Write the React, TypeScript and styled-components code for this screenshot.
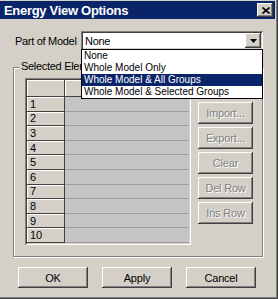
import React from "react";
import styled, { createGlobalStyle } from "styled-components";

const face = "#d4d0c8";
const navy = "#0a246a";

const GlobalStyle = createGlobalStyle`
  html, body {
    margin: 0;
    padding: 0;
    background: ${face};
  }
  body {
    font-family: "Liberation Sans", Arial, sans-serif;
    font-size: 11px;
    color: #000;
  }
  * {
    box-sizing: border-box;
  }
`;

const raised = `
  background: ${face};
  box-shadow: inset -1px -1px #404040, inset 1px 1px #ffffff,
    inset -2px -2px #808080, inset 2px 2px ${face};
`;

const sunken = `
  box-shadow: inset 1px 1px #808080, inset -1px -1px #ffffff,
    inset 2px 2px #404040, inset -2px -2px ${face};
`;

const partOptions = [
  "None",
  "Whole Model Only",
  "Whole Model & All Groups",
  "Whole Model & Selected Groups",
];

const rows = [1, 2, 3, 4, 5, 6, 7, 8, 9, 10];

const App = () => {
  return (
    <>
      <GlobalStyle />
      <Window>
        <TitleBar>
          <Title>Energy View Options</Title>
          <CloseButton>
            <svg width="8" height="7" viewBox="0 0 8 7">
              <path d="M0.5 0.5 L7.5 6.5 M7.5 0.5 L0.5 6.5" stroke="#000" strokeWidth="1.6" />
            </svg>
          </CloseButton>
        </TitleBar>

        <Body>
          <FieldRow>
            <FieldLabel>Part of Model</FieldLabel>
            <Combo>
              <ComboText>None</ComboText>
              <ArrowButton>
                <svg width="7" height="4" viewBox="0 0 7 4">
                  <path d="M0 0 H7 L3.5 4 Z" fill="#000" />
                </svg>
              </ArrowButton>
              {/* open list, drawn over the group box below */}
              <DropList>
                {partOptions.map((o, i) => (
                  <DropItem key={o} $active={i === 2}>{o}</DropItem>
                ))}
              </DropList>
            </Combo>
          </FieldRow>

          <GroupBox>
            <GroupCaption>Selected Elements</GroupCaption>
            <Grid>
              <GridInner>
                <HeadCell />
                <HeadCell />
                {rows.map((r) => (
                  <React.Fragment key={r}>
                    <RowHead>{r}</RowHead>
                    <DataCell />
                  </React.Fragment>
                ))}
              </GridInner>
            </Grid>
            <SideButtons>
              <SideButton disabled>Import...</SideButton>
              <SideButton disabled>Export...</SideButton>
              <SideButton disabled>Clear</SideButton>
              <SideButton disabled>Del Row</SideButton>
              <SideButton disabled>Ins Row</SideButton>
            </SideButtons>
          </GroupBox>

          <Footer>
            <DialogButton>OK</DialogButton>
            <DialogButton>Apply</DialogButton>
            <DialogButton>Cancel</DialogButton>
          </Footer>
        </Body>
      </Window>
    </>
  );
};

const Window = styled.div`
  width: 278px;
  height: 299px;
  padding: 1px 3px 3px 0;
  background: ${face};
  display: flex;
  flex-direction: column;
  box-shadow: inset -1px -1px #404040, inset -2px -2px #808080;
`;

const TitleBar = styled.div`
  height: 18px;
  background: ${navy};
  display: flex;
  align-items: center;
  justify-content: space-between;
  padding: 0 2px 0 4px;
`;

const Title = styled.div`
  color: #fff;
  font-weight: bold;
  font-size: 13px;
  letter-spacing: -0.3px;
`;

const CloseButton = styled.div`
  width: 16px;
  height: 14px;
  ${raised};
  display: flex;
  align-items: center;
  justify-content: center;
  padding-left: 1px;
`;

const Body = styled.div`
  display: flex;
  flex-direction: column;
  padding-left: 13px;
`;

const FieldRow = styled.div`
  margin-top: 12px;
  height: 19px;
  display: flex;
  align-items: center;
  position: relative;
  z-index: 2;
`;

const FieldLabel = styled.div`
  width: 68px;
  padding-left: 2px;
  letter-spacing: -0.3px;
`;

const Combo = styled.div`
  position: relative;
  width: 182px;
  height: 19px;
  background: #fff;
  ${sunken};
  display: flex;
  align-items: center;
  justify-content: space-between;
  padding: 2px;
`;

const ComboText = styled.div`
  padding-left: 2px;
  letter-spacing: -0.3px;
`;

const ArrowButton = styled.div`
  width: 16px;
  height: 15px;
  ${raised};
  display: flex;
  align-items: center;
  justify-content: center;
`;

const DropList = styled.div`
  position: absolute;
  left: 0;
  top: 18px;
  width: 182px;
  background: #fff;
  border: 1px solid #000;
  display: flex;
  flex-direction: column;
`;

const DropItem = styled.div<{ $active?: boolean }>`
  height: 12px;
  line-height: 12px;
  font-size: 10px;
  padding-left: 2px;
  white-space: nowrap;
  background: ${(p) => (p.$active ? navy : "#fff")};
  color: ${(p) => (p.$active ? "#fff" : "#000")};
`;

const GroupBox = styled.div`
  position: relative;
  margin-top: 17px;
  width: 250px;
  height: 190px;
  border: 1px solid #808080;
  box-shadow: inset 1px 1px #fff, 1px 1px #fff;
  padding: 10px 0 0 11px;
  display: flex;
  gap: 7px;
`;

const GroupCaption = styled.div`
  position: absolute;
  top: -8px;
  left: 5px;
  padding: 0 2px;
  background: ${face};
  letter-spacing: -0.3px;
  white-space: nowrap;
`;

const Grid = styled.div`
  width: 166px;
  height: 167px;
  padding: 2px;
  ${sunken};
  background: #c4c4c4;
`;

const GridInner = styled.div`
  height: 100%;
  display: grid;
  grid-template-columns: 38px 124px;
  grid-template-rows: 17px repeat(10, 1fr);
`;

const HeadCell = styled.div`
  background: ${face};
  border-right: 1px solid #404040;
  border-bottom: 1px solid #404040;
  box-shadow: inset 1px 1px #fff;
`;

const RowHead = styled(HeadCell)`
  padding-left: 3px;
  display: flex;
  align-items: center;
`;

const DataCell = styled.div`
  background: #c4c4c4;
  border-bottom: 1px solid #9c9c9c;
`;

const SideButtons = styled.div`
  margin-top: 24px;
  display: flex;
  flex-direction: column;
  gap: 3px;
`;

const buttonBase = `
  ${raised};
  border: none;
  padding: 0;
  font-family: "Liberation Sans", Arial, sans-serif;
  font-size: 11px;
  letter-spacing: -0.2px;
  color: #000;
`;

const SideButton = styled.button`
  ${buttonBase};
  width: 55px;
  height: 22px;
  &:disabled {
    color: #808080;
    text-shadow: 1px 1px 0 #fff;
  }
`;

const Footer = styled.div`
  margin-top: 10px;
  padding-left: 5px;
  display: flex;
  gap: 14px;
`;

const DialogButton = styled.button`
  ${buttonBase};
  width: 70px;
  height: 21px;
`;

export default App;
